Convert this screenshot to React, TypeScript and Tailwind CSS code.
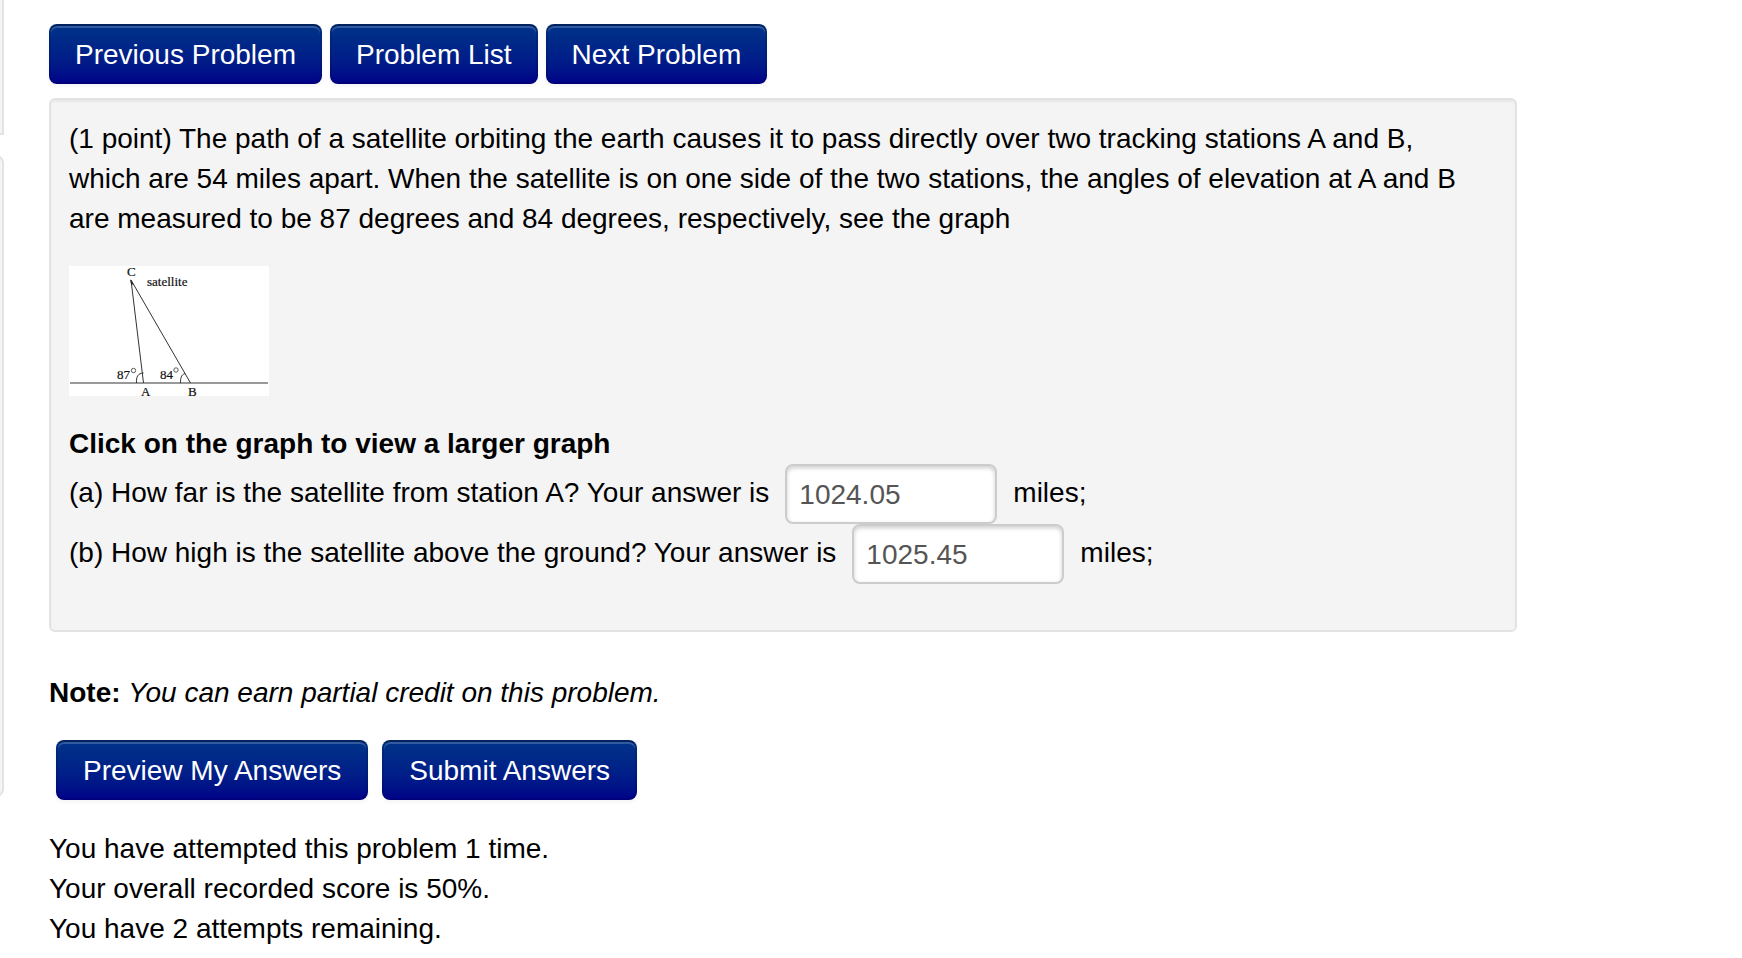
import type { ReactNode } from "react";

const answers = [
	{
		id: "answer-a",
		question: "(a) How far is the satellite from station A? Your answer is",
		value: "1024.05",
	},
	{
		id: "answer-b",
		question: "(b) How high is the satellite above the ground? Your answer is",
		value: "1025.45",
	},
];

const results = [
	"You have attempted this problem 1 time.",
	"Your overall recorded score is 50%.",
	"You have 2 attempts remaining.",
];

function Button({ children, wide }: { children: ReactNode; wide?: boolean }) {
	return (
		<button
			type="button"
			className={`flex h-[60px] items-center rounded-lg border-2 border-black/10 border-t-black/30 bg-linear-to-b from-[#003388] to-[#000088] bg-origin-border pt-0.5 text-white shadow-[inset_0_2px_0_rgba(255,255,255,0.2),0_2px_4px_rgba(0,0,0,0.05)] ${
				wide ? "px-[25px]" : "px-6"
			}`}
		>
			{children}
		</button>
	);
}

function SatelliteGraph() {
	return (
		<svg
			width="200"
			height="130"
			viewBox="0 0 200 130"
			className="block overflow-visible bg-white font-['Liberation_Serif',serif]"
			role="img"
			aria-label="Satellite above stations A and B"
		>
			<path d="M1 117H199" stroke="#999" strokeWidth="2" />
			<g fill="none" stroke="#333" strokeWidth="1">
				<path d="M62 14L74.5 117" />
				<path d="M62 14L121.5 117" />
				<path d="M67.5 117C67 111 69 107 74.5 107" />
				<path d="M111.5 117C111.5 112 112 109 116 107.5" />
			</g>
			<path d="M61 13L65 19L62 18Z" fill="#222" />
			<g fill="#111" stroke="#111" strokeWidth="0.2" fontSize="13">
				<text x="58" y="10">C</text>
				<text x="78" y="20">satellite</text>
				<text x="48" y="113">87</text>
				<text x="91" y="113">84</text>
				<text x="72" y="130">A</text>
				<text x="119" y="130">B</text>
			</g>
			<g fill="none" stroke="#333" strokeWidth="0.8">
				<circle cx="64.5" cy="104.5" r="2.2" />
				<circle cx="107" cy="104" r="2.2" />
			</g>
		</svg>
	);
}

export default function App() {
	return (
		<div className="flex min-h-screen bg-white font-['Liberation_Sans',Arial,sans-serif] text-[28px] leading-10 text-black">
			<aside className="flex w-1 shrink-0 flex-col items-end gap-5">
				<div className="h-[135px] w-10 border-r-2 border-b-2 border-[#e3e3e3] bg-[#f5f5f5]" />
				<div className="h-[642px] w-10 rounded-lg border-2 border-[#e3e3e3] bg-[#f5f5f5]" />
			</aside>

			<main className="min-w-0 flex-1 pt-6 pr-[225px] pl-[45px]">
				<nav className="flex gap-2">
					<Button>Previous Problem</Button>
					<Button>Problem List</Button>
					<Button>Next Problem</Button>
				</nav>

				<section className="mt-[14px] rounded-md border-2 border-[#e3e3e3] bg-[#f4f4f4] px-[18px] pt-[19px] pb-[46px] shadow-[inset_0_2px_2px_rgba(0,0,0,0.05)]">
					<p className="pr-5">
						(1 point) The path of a satellite orbiting the earth causes it to pass
						directly over two tracking stations A and B, which are 54 miles apart.
						When the satellite is on one side of the two stations, the angles of
						elevation at A and B are measured to be 87 degrees and 84 degrees,
						respectively, see the graph
					</p>
					<a href="#graph" className="mt-[27px] mb-7 block w-fit">
						<SatelliteGraph />
					</a>
					<p className="font-bold">Click on the graph to view a larger graph</p>
					{answers.map((answer) => (
						<div key={answer.id} className="flex items-center gap-4">
							<label htmlFor={answer.id} className="pb-0.5">
								{answer.question}
							</label>
							<input
								id={answer.id}
								type="text"
								defaultValue={answer.value}
								className="h-[60px] w-[212px] rounded-lg border-2 border-[#ccc] bg-white px-3 pt-0.5 text-[#555] shadow-[inset_0_2px_4px_rgba(0,0,0,0.2)]"
							/>
							<span className="pb-0.5">miles;</span>
						</div>
					))}
				</section>

				<p className="mt-[41px]">
					<b>Note:</b> <i>You can earn partial credit on this problem.</i>
				</p>

				<div className="mt-[27px] flex gap-[14px] pl-[7px]">
					<Button wide>Preview My Answers</Button>
					<Button wide>Submit Answers</Button>
				</div>

				<div className="mt-[29px]">
					{results.map((line) => (
						<p key={line}>{line}</p>
					))}
				</div>
			</main>
		</div>
	);
}
